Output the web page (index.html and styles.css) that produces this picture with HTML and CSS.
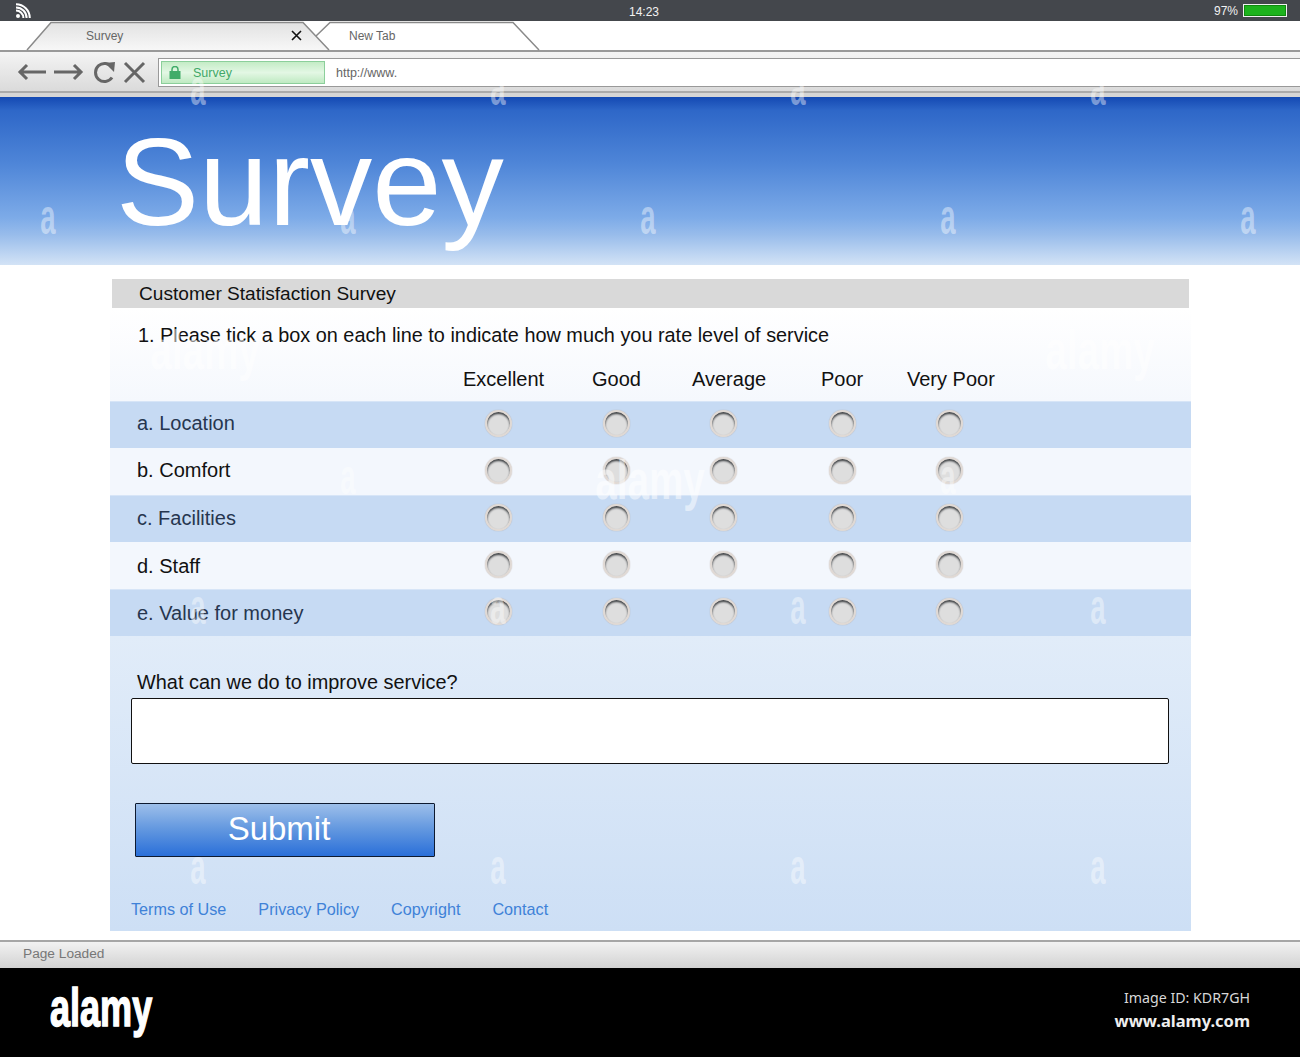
FILE: index.html
```html
<!DOCTYPE html>
<html lang="en">
<head>
<meta charset="utf-8">
<title>Survey</title>
<link rel="stylesheet" href="styles.css">
</head>
<body>
<div class="status">
  <svg class="rss" width="16" height="16" viewBox="0 0 16 16"><circle cx="3" cy="13" r="2" fill="#fff"/><path d="M1 7.6a7.4 7.4 0 0 1 7.4 7.4M1 4.4A10.6 10.6 0 0 1 11.6 15M1 1.2A13.8 13.8 0 0 1 14.8 15" fill="none" stroke="#fff" stroke-width="2"/></svg>
  <span class="clock">14:23</span>
  <div class="batt"><span>97%</span><i class="cell"></i></div>
</div>
<div class="tabs">
  <div class="tab tab-on">
    <svg class="tab-bg" width="304" height="30" viewBox="0 0 304 30"><defs><linearGradient id="tg" x1="0" y1="0" x2="0" y2="1"><stop offset="0" stop-color="#e2e2e2"/><stop offset="1" stop-color="#f7f7f7"/></linearGradient></defs><path d="M1 29 25 1.500H277L303 29" fill="url(#tg)" stroke="#8a8a8a" stroke-width="1.500"/></svg>
    <span class="tab-label">Survey</span>
    <svg class="tab-x" width="11" height="11" viewBox="0 0 11 11"><path d="M1 1 10 10M10 1 1 10" stroke="#111" stroke-width="1.600"/></svg>
  </div>
  <div class="tab tab-off">
    <svg class="tab-bg" width="226" height="30" viewBox="0 0 226 30"><path d="M1 15 15 1.500H198L224 29" fill="#fff" stroke="#8a8a8a" stroke-width="1.500"/></svg>
    <span class="tab-label">New Tab</span>
  </div>
</div>
<div class="toolbar">
  <svg class="nav" width="130" height="26" viewBox="0 0 130 26">
    <g fill="none" stroke="#666" stroke-width="3">
      <path d="M2 13H29M10 6 3 13 10 20"/>
      <path d="M37 13H64M57 6 64 13 57 20"/>
      <path d="M95 8.500A9 9 0 1 0 95 18.500"/>
      <path d="M108 4 127 23M127 4 108 23"/>
    </g>
    <path d="M88 4 98 3 97 13Z" fill="#666"/>
  </svg>
  <div class="address">
    <div class="secure">
      <svg width="14" height="14" viewBox="0 0 14 14"><path d="M4 6V3.500a3 3 0 0 1 6 0V6" fill="none" stroke="#41ac69" stroke-width="1.500"/><rect x="1.500" y="5" width="11" height="8" fill="#41ac69"/></svg>
      <span>Survey</span>
    </div>
    <span class="url">http://www.</span>
  </div>
</div>
<header class="hero"><h1>Survey</h1></header>
<main class="page">
  <section class="panel">
    <h2 class="title">Customer Statisfaction Survey</h2>
    <div class="intro">
      <p class="question">1. Please tick a box on each line to indicate how much you rate level of service</p>
      <div class="scale"><span></span><span>Excellent</span><span>Good</span><span>Average</span><span>Poor</span><span>Very Poor</span></div>
    </div>
    <div class="row row-blue"><span class="label">a. Location</span><i class="radio"></i><i class="radio"></i><i class="radio"></i><i class="radio"></i><i class="radio"></i></div>
    <div class="row row-pale"><span class="label label-dark">b. Comfort</span><i class="radio"></i><i class="radio"></i><i class="radio"></i><i class="radio"></i><i class="radio"></i></div>
    <div class="row row-blue"><span class="label label-mid">c. Facilities</span><i class="radio"></i><i class="radio"></i><i class="radio"></i><i class="radio"></i><i class="radio"></i></div>
    <div class="row row-pale"><span class="label label-dark label-low">d. Staff</span><i class="radio"></i><i class="radio"></i><i class="radio"></i><i class="radio"></i><i class="radio"></i></div>
    <div class="row row-blue"><span class="label label-lower">e. Value for money</span><i class="radio"></i><i class="radio"></i><i class="radio"></i><i class="radio"></i><i class="radio"></i></div>
    <div class="lower">
      <label class="improve">What can we do to improve service?</label>
      <div class="textbox"></div>
      <div class="submit">Submit</div>
      <nav class="links"><a>Terms of Use</a><a>Privacy Policy</a><a>Copyright</a><a>Contact</a></nav>
    </div>
  </section>
</main>
<div class="footer">Page Loaded</div>
<div class="credit">
  <span class="logo">alamy</span>
  <div class="ids"><span class="id">Image ID: KDR7GH</span><span class="www">www.alamy.com</span></div>
</div>
<div class="wm-layer" aria-hidden="true">
  <span class="wm w1">a</span><span class="wm w2">a</span><span class="wm w3">a</span><span class="wm w4">a</span>
  <span class="wm w5">a</span><span class="wm w6">a</span><span class="wm w7">a</span><span class="wm w8">a</span><span class="wm w9">a</span>
  <span class="wm w10">a</span><span class="wm w11">a</span><span class="wm w12">a</span><span class="wm w13">a</span>
  <span class="wm w14">a</span><span class="wm w15">a</span><span class="wm w16">a</span><span class="wm w17">a</span>
  <span class="wm w18">a</span><span class="wm w19">a</span>
  <span class="wm-big">alamy</span>
  <span class="wm-big wb2">alamy</span>
  <span class="wm-big wb3">alamy</span>
</div>
</body>
</html>
```
FILE: styles.css
```css
* { box-sizing: border-box; }
html, body { margin: 0; padding: 0; }
body {
  position: relative;
  width: 1300px;
  height: 1057px;
  overflow: hidden;
  background: #fff;
  font-family: "Liberation Sans", Arial, sans-serif;
  color: #111;
}
.status {
  height: 21px;
  background: #44474c;
  color: #f2f2f2;
  font-size: 12px;
  display: grid;
  grid-template-columns: 1fr auto 1fr;
  align-items: center;
  padding: 0 13px 0 15px;
}
.rss { display: block; margin-top: 1px; }
.clock { padding-top: 2px; margin-right: 14px; }
.batt { justify-self: end; display: flex; align-items: center; gap: 5px; }
.cell {
  display: block;
  width: 44px;
  height: 13px;
  background: #1db31d;
  border: 1px solid #f0f0f0;
  box-shadow: inset 0 0 0 1px #0f8a0f;
}
.tabs {
  height: 29px;
  display: flex;
  padding-left: 26px;
  background: #fff;
}
.tab { position: relative; height: 29px; flex: none; font-size: 12px; color: #666; }
.tab-bg { position: absolute; left: 0; top: 0; }
.tab-label { position: absolute; top: 8px; white-space: nowrap; }
.tab-on { width: 289px; z-index: 1; }
.tab-on .tab-label { left: 60px; }
.tab-x { position: absolute; left: 265px; top: 9px; }
.tab-off { width: 226px; }
.tab-off .tab-label { left: 34px; }
.toolbar {
  height: 47px;
  border-top: 2px solid #999;
  background: linear-gradient(#f4f4f4, #d9d9d9);
  display: flex;
  align-items: flex-start;
  padding: 6px 0 0 17px;
  border-bottom: 4px solid #d5d5d5;
  box-shadow: inset 0 -2px 0 #aaa;
}
.nav { flex: none; margin-top: 1px; width: 130px; }
.address {
  margin-left: 11px;
  flex: 1;
  height: 29px;
  background: #fff;
  border: 1px solid #999;
  border-right: 0;
  display: flex;
  align-items: center;
  padding-left: 2px;
  font-size: 12.500px;
  color: #666;
}
.secure {
  width: 164px;
  height: 23px;
  background: linear-gradient(#c4ecc6, #e3f7e4 50%, #bfeac2);
  border: 1px solid #8ccf9b;
  display: flex;
  align-items: center;
  gap: 11px;
  padding-left: 6px;
  color: #41a868;
}
.url { margin-left: 11px; }
.hero {
  height: 168px;
  background: linear-gradient(#1449b3 0, #2e67c8 8%, #4f86d8 40%, #7dabe8 72%, #98bceb 82%, #d3e3f6 100%);
  padding-left: 116px;
  overflow: hidden;
}
.hero h1 {
  margin: 0;
  padding-top: 13px;
  font-size: 124.600px;
  line-height: 143px;
  font-weight: 400;
  color: #fff;
}
.page { height: 675px; padding: 14px 109px 0 110px; background: #fff; }
.panel { height: 652px; display: flex; flex-direction: column; }
.title {
  margin: 0 2px 0 2px;
  height: 29px;
  flex: none;
  background: #d9d9d9;
  font-size: 19.100px;
  line-height: 29px;
  font-weight: 400;
  padding-left: 27px;
}
.intro {
  height: 93px;
  flex: none;
  background: linear-gradient(#fff, #f5f8fd);
  font-size: 20px;
}
.question { margin: 0; padding: 15px 0 0 28px; line-height: 24px; font-size: 19.880px; }
.scale {
  display: grid;
  grid-template-columns: 353px 129px 100px 129px 86px auto;
  margin-top: 20px;
  line-height: 24px;
}
.row {
  height: 47px;
  flex: none;
  display: grid;
  grid-template-columns: 375px 118px 107px 119px 107px auto;
  align-items: center;
  font-size: 20px;
  padding-bottom: 2px;
}
.row-blue { background: #c6daf3; padding-bottom: 3px; box-shadow: inset 0 1px 0 #d7e5f7; }
.row-pale { background: #f3f7fd; }
.label { padding-left: 27px; color: #26364f; }
.label-dark { color: #111; }
.label-mid { padding-top: 2px; }
.label-low { padding-top: 4px; }
.label-lower { padding-top: 5px; }
.radio {
  display: block;
  width: 27px;
  height: 27px;
  border-radius: 50%;
  background: radial-gradient(circle at 50% 56%, #dedede 52%, #c6c6c6 76%, #8f8f8f 100%);
  border: 2px solid #e0d9d4;
  box-shadow: inset 0 2px 2px #44474a, 0 0 1px #a89a92;
}
.lower {
  flex: 1;
  background: linear-gradient(#e1ecf9, #cddff5);
  display: flex;
  flex-direction: column;
  align-items: flex-start;
  padding: 34px 0 0 21px;
}
.improve { font-size: 19.900px; line-height: 24px; padding-left: 6px; }
.textbox {
  margin-top: 4px;
  width: 1038px;
  height: 66px;
  background: #fff;
  border: 1px solid #111;
  border-radius: 2px;
}
.submit {
  margin: 39px 0 0 4px;
  width: 300px;
  height: 54px;
  border: 1px solid #0d1a30;
  border-radius: 1px;
  background: linear-gradient(#9dbfea, #669ae0 45%, #2a6fd9);
  color: #fff;
  font-size: 33px;
  line-height: 50px;
  text-align: center;
  padding-right: 12px;
}
.links {
  margin-top: 42px;
  display: flex;
  gap: 32px;
  font-size: 16.200px;
  line-height: 20px;
  color: #3f82d8;
}
.footer {
  height: 28px;
  border-top: 2px solid #a6a6a6;
  background: linear-gradient(#f2f2f2, #d2d2d2);
  color: #777;
  font-size: 13.700px;
  line-height: 24px;
  padding-left: 23px;
}
.credit {
  height: 89px;
  background: #000;
  color: #fff;
  display: flex;
  justify-content: space-between;
  padding: 0 50px;
}
.logo {
  display: block;
  font-weight: 700;
  font-size: 53px;
  line-height: 80px;
  transform: scaleX(.68);
  transform-origin: left center;
  -webkit-text-stroke: 1.500px #fff;
}
.ids {
  font-family: "Noto Sans", "Open Sans", sans-serif;
  display: flex;
  flex-direction: column;
  align-items: flex-end;
  padding-top: 20px;
}
.id { font-size: 14.200px; line-height: 20px; color: #d8d8d8; }
.www { font-size: 16.500px; line-height: 25px; font-weight: 700; color: #eee; }
.wm-layer { position: absolute; inset: 0; pointer-events: none; }
.wm, .wm-big {
  position: absolute;
  font-weight: 700;
  color: rgba(255, 255, 255, .42);
  font-size: 50px;
  line-height: 50px;
  margin-top: -7px;
  transform: translateX(-50%) scaleX(.55);
}
.wm-big { left: 650px; top: 452px; margin-top: 0; font-size: 56px; line-height: 56px; color: rgba(255,255,255,.5); transform: translateX(-50%) scaleX(.69); }
.wb2 { left: 205px; top: 322px; }
.wb3 { left: 1100px; top: 322px; }
.w1 { left: 198px; top: 70px; } .w2 { left: 498px; top: 70px; } .w3 { left: 798px; top: 70px; } .w4 { left: 1098px; top: 70px; }
.w5 { left: 48px; top: 199px; } .w6 { left: 348px; top: 199px; } .w7 { left: 648px; top: 199px; } .w8 { left: 948px; top: 199px; } .w9 { left: 1248px; top: 199px; }
.w10 { left: 198px; top: 589px; } .w11 { left: 498px; top: 589px; } .w12 { left: 798px; top: 589px; } .w13 { left: 1098px; top: 589px; }
.w14 { left: 198px; top: 849px; } .w15 { left: 498px; top: 849px; } .w16 { left: 798px; top: 849px; } .w17 { left: 1098px; top: 849px; }
.w18 { left: 348px; top: 459px; } .w19 { left: 948px; top: 459px; }
```
